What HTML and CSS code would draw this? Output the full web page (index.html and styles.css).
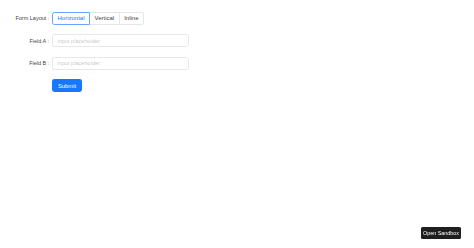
FILE: index.html
```html
<!DOCTYPE html>
<html>
<head>
<meta charset="utf-8">
<link rel="stylesheet" href="styles.css">
</head>
<body>
<form class="form">
  <div class="row">
    <div class="label"><span>Form Layout</span><span class="colon">:</span></div>
    <div class="control">
      <div class="radio-group">
        <span class="radio active">Horizontal</span>
        <span class="radio">Vertical</span>
        <span class="radio">Inline</span>
      </div>
    </div>
  </div>
  <div class="row">
    <div class="label"><span>Field A</span><span class="colon">:</span></div>
    <div class="control"><input class="input" placeholder="input placeholder"></div>
  </div>
  <div class="row">
    <div class="label"><span>Field B</span><span class="colon">:</span></div>
    <div class="control"><input class="input" placeholder="input placeholder"></div>
  </div>
  <div class="row">
    <div class="label"></div>
    <div class="control"><button type="button" class="btn">Submit</button></div>
  </div>
</form>
<button class="sandbox" type="button">Open Sandbox</button>
</body>
</html>
```
FILE: styles.css
```css
html, body {
  margin: 0;
  padding: 0;
  background: #fff;
  font-family: "Liberation Sans", Arial, sans-serif;
  font-size: 5.8px;
  color: rgba(0, 0, 0, 0.82);
}

.form {
  width: 177px;
  padding: 12px 0 0 12px;
  display: flex;
  flex-direction: column;
  gap: 9.6px;
}

.row {
  display: flex;
  align-items: center;
  height: 12.8px;
}

.label {
  width: 40px;
  flex: none;
  display: flex;
  justify-content: flex-end;
  align-items: center;
  white-space: nowrap;
  padding-right: 3px;
  box-sizing: border-box;
  font-size: 5.5px;
}

.colon {
  margin-left: 1.2px;
}

.control {
  flex: 1;
  display: flex;
  align-items: center;
}

.radio-group {
  display: flex;
}

.radio {
  height: 12.8px;
  line-height: 11px;
  padding: 0 4.5px;
  font-size: 6px;
  border: 1px solid #e6e6e6;
  border-left-width: 0;
  box-sizing: border-box;
  background: #fff;
}

.radio:first-child {
  border-left-width: 1px;
  border-radius: 2.4px 0 0 2.4px;
}

.radio:last-child {
  border-radius: 0 2.4px 2.4px 0;
}

.radio.active {
  border-color: #6aa3ff;
  color: #1677ff;
}

.input {
  width: 137px;
  height: 12.8px;
  box-sizing: border-box;
  border: 1px solid #e8e8e8;
  border-radius: 2.4px;
  padding: 0 4.4px;
  font-family: inherit;
  font-size: 5.6px;
  color: rgba(0, 0, 0, 0.88);
  outline: none;
}

.input::placeholder {
  color: rgba(0, 0, 0, 0.28);
}

.btn {
  height: 12.8px;
  padding: 0 6px;
  border: none;
  border-radius: 2.4px;
  background: #1677ff;
  color: #fff;
  font-family: inherit;
  font-size: 5.8px;
}

.sandbox {
  position: fixed;
  right: 13px;
  bottom: 9px;
  width: 40px;
  height: 12.4px;
  padding: 0;
  border: none;
  border-radius: 1.6px;
  background: #1f1f1f;
  color: #fff;
  font-family: inherit;
  font-size: 5.4px;
}
```
